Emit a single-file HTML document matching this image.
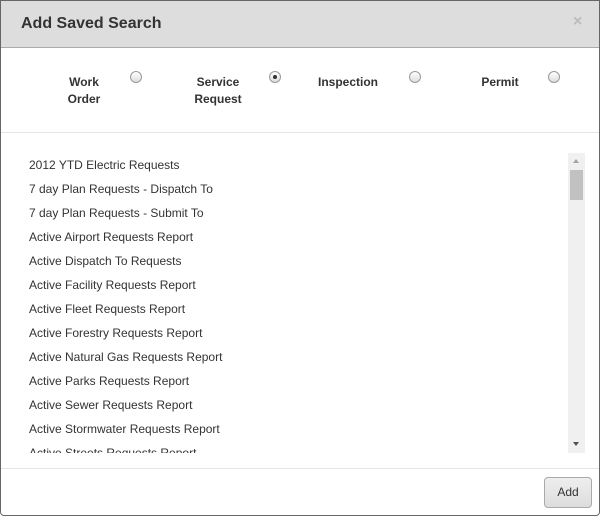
<!DOCTYPE html>
<html><head><style>
*{margin:0;padding:0;box-sizing:border-box}
body{width:600px;height:516px;background:#fff;font-family:"Liberation Sans",sans-serif;color:#333;position:relative;overflow:hidden}
.dlg{position:absolute;left:0;top:0;width:600px;height:516px;border:1px solid #666;border-radius:0 0 4px 4px;overflow:hidden}
.hdr{position:absolute;left:0;top:0;width:598px;height:47px;background:#ddd;border-bottom:1px solid #aaa}
.hdr h1{position:absolute;left:20px;top:14px;font-size:16px;font-weight:bold;color:#333}
.x{position:absolute;left:572px;top:12px;font-size:16px;font-weight:bold;color:#bbb}
.lbl{position:absolute;font-size:12px;font-weight:bold;text-align:center;line-height:17px;color:#333}
.r{position:absolute;width:12px;height:12px;border:1px solid #999;border-radius:50%;background:linear-gradient(#fff,#ddd)}
.r.on::after{content:"";position:absolute;left:3px;top:3px;width:4px;height:4px;border-radius:50%;background:#333}
.sep{position:absolute;left:0;width:598px;height:1px;background:#e5e5e5}
.list{position:absolute;left:28px;top:152px;font-size:12px;line-height:24px;height:300px;overflow:hidden;width:530px}
.sb{position:absolute;left:567px;top:152px;width:17px;height:300px;background:#f0f0f0}
.th{position:absolute;left:569px;top:169px;width:13px;height:30px;background:#c1c1c1}
.btn{position:absolute;left:543px;top:476px;width:48px;height:31px;border:1px solid #aaa;border-radius:4px;background:linear-gradient(#eee,#ddd);font-size:12px;text-align:center;line-height:29px;color:#333}
</style></head><body>
<div class="dlg">
<div class="hdr"><h1>Add Saved Search</h1><div class="x">×</div></div>
<div class="lbl" style="left:53px;top:73px;width:60px">Work<br>Order</div>
<div class="r" style="left:129px;top:70px"></div>
<div class="lbl" style="left:182px;top:73px;width:70px">Service<br>Request</div>
<div class="r on" style="left:268px;top:70px"></div>
<div class="lbl" style="left:312px;top:73px;width:70px">Inspection</div>
<div class="r" style="left:408px;top:70px"></div>
<div class="lbl" style="left:469px;top:73px;width:60px">Permit</div>
<div class="r" style="left:547px;top:70px"></div>
<div class="sep" style="top:131px"></div>
<div class="list">2012 YTD Electric Requests<br>7 day Plan Requests - Dispatch To<br>7 day Plan Requests - Submit To<br>Active Airport Requests Report<br>Active Dispatch To Requests<br>Active Facility Requests Report<br>Active Fleet Requests Report<br>Active Forestry Requests Report<br>Active Natural Gas Requests Report<br>Active Parks Requests Report<br>Active Sewer Requests Report<br>Active Stormwater Requests Report<br>Active Streets Requests Report</div>
<div class="sb"><div style="position:absolute;left:5px;top:6px;border:3.5px solid transparent;border-bottom:4px solid #a3a3a3;border-top:0"></div><div style="position:absolute;left:5px;top:289px;border:3.5px solid transparent;border-top:4px solid #505050;border-bottom:0"></div></div>
<div class="th"></div>
<div class="sep" style="top:467px"></div>
<div class="btn">Add</div>
</div>
</body></html>
